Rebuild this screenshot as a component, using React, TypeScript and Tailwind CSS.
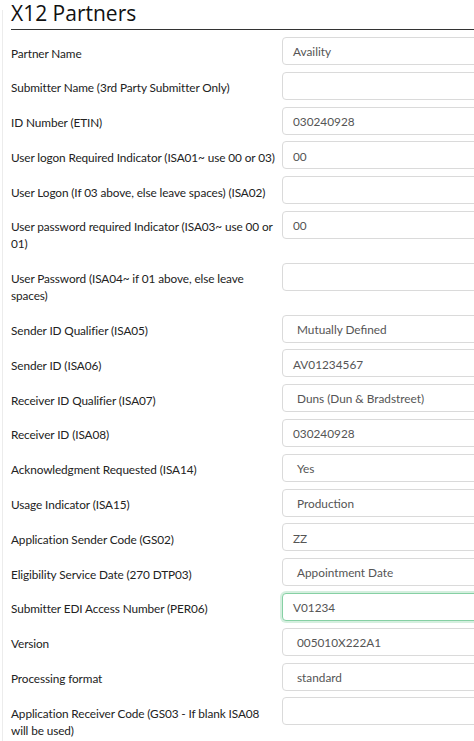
import React from "react";

type Row = {
  label: React.ReactNode;
  value?: string;
  kind?: "text" | "select";
  focused?: boolean;
};

const rows: Row[] = [
  { label: "Partner Name", value: "Availity", kind: "text" },
  { label: "Submitter Name (3rd Party Submitter Only)", value: "" },
  { label: "ID Number (ETIN)", value: "030240928" },
  { label: "User logon Required Indicator (ISA01~ use 00 or 03)", value: "00" },
  { label: "User Logon (If 03 above, else leave spaces) (ISA02)", value: "" },
  {
    label: (
      <>
        User password required Indicator (ISA03~ use 00 or
        <br />
        01)
      </>
    ),
    value: "00",
  },
  {
    label: (
      <>
        User Password (ISA04~ if 01 above, else leave
        <br />
        spaces)
      </>
    ),
    value: "",
  },
  { label: "Sender ID Qualifier (ISA05)", value: "Mutually Defined", kind: "select" },
  { label: "Sender ID (ISA06)", value: "AV01234567" },
  { label: "Receiver ID Qualifier (ISA07)", value: "Duns (Dun & Bradstreet)", kind: "select" },
  { label: "Receiver ID (ISA08)", value: "030240928" },
  { label: "Acknowledgment Requested (ISA14)", value: "Yes", kind: "select" },
  { label: "Usage Indicator (ISA15)", value: "Production", kind: "select" },
  { label: "Application Sender Code (GS02)", value: "ZZ" },
  { label: "Eligibility Service Date (270 DTP03)", value: "Appointment Date", kind: "select" },
  { label: "Submitter EDI Access Number (PER06)", value: "V01234", focused: true },
  { label: "Version", value: "005010X222A1", kind: "select" },
  { label: "Processing format", value: "standard", kind: "select" },
  {
    label: (
      <>
        Application Receiver Code (GS03 - If blank ISA08
        <br />
        will be used)
      </>
    ),
    value: "",
  },
];

export default function App() {
  return (
    <div
      className="relative w-[474px] h-[741px] overflow-hidden bg-white"
      style={{ fontFamily: 'Lato, "Open Sans", sans-serif' }}
    >
      <div className="absolute left-[2px] top-[10px] bottom-0 w-px bg-[#ececec]" />
      <div className="w-[560px] pl-[11px]">
        <h1
          className="text-[21px] leading-[26px] font-normal text-[#111] pb-[3px] border-b border-[#333]"
          style={{ fontFamily: '"Open Sans", sans-serif' }}
        >
          X12 Partners
        </h1>
        <div className="mt-[7px] flex flex-col gap-[5.8px]">
          {rows.map((r, i) => (
            <div key={i} className="flex items-start">
              <div className="w-[271px] shrink-0 pt-[7.5px] pb-[4.5px] text-[11.8px] leading-[17px] tracking-[-0.1px] text-[#222] whitespace-nowrap">
                {r.label}
              </div>
              <div
                className={
                  "w-[240px] h-[28px] rounded-[4px] border bg-white flex items-center pt-[2px] text-[11.8px] text-[#555] whitespace-nowrap " +
                  (r.kind === "select" ? "pl-[14px] " : "pl-[10px] ") +
                  (r.focused
                    ? "border-[#86d0a4] shadow-[0_0_0_2px_rgba(134,208,164,0.35)]"
                    : "border-[#dadada]")
                }
              >
                {r.value}
              </div>
            </div>
          ))}
        </div>
      </div>
    </div>
  );
}
